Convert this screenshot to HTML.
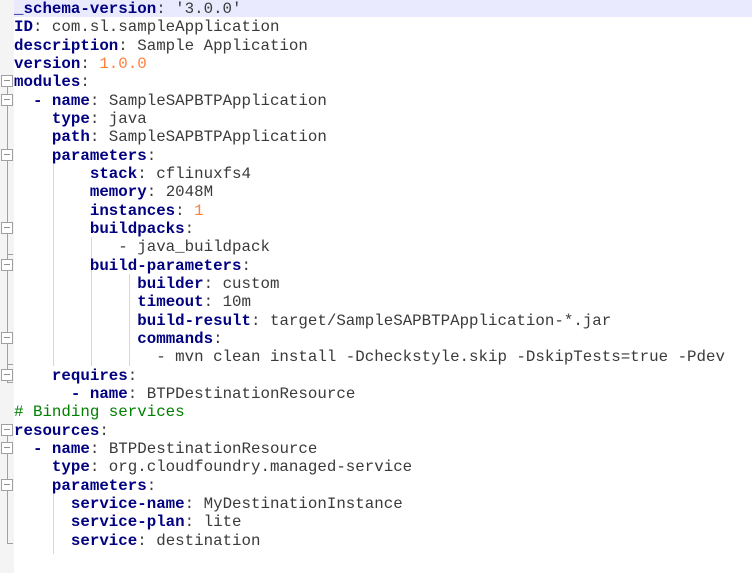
<!DOCTYPE html>
<html><head><meta charset="utf-8"><style>
html,body{margin:0;padding:0;background:#fff;width:752px;height:573px;overflow:hidden}
#m{position:absolute;left:0;top:0;width:14px;height:573px;background:#f4f4f4}
.hl{position:absolute;left:14px;top:0;width:738px;height:17px;background:#eaeaff}
.l{position:absolute;left:14px;height:18.33px;line-height:18.33px;font-family:"Liberation Mono",monospace;font-size:15.8px;white-space:pre;color:#3a3a3a}
.k{color:#000080;font-weight:bold}
.n{color:#ff8040}
.c{color:#008000}
.v{position:absolute;left:7px;width:1px;background:#a0a0a0}
.b{position:absolute;left:1px;width:12px;height:12px;border:1px solid #a0a0a0;background:#fff;box-sizing:border-box}
.b:after{content:"";position:absolute;left:2px;right:2px;top:4px;height:1px;background:#909090}
.e{position:absolute;left:7px;width:6px;height:1px;background:#a0a0a0}
.g{position:absolute;width:1px;background:#d8d8d8}
</style></head><body>
<div id="m"></div>
<div class="hl"></div>
<div class="v" style="top:86px;height:296px"></div>
<div class="v" style="top:435px;height:108px"></div>
<div class="b" style="top:75px"></div>
<div class="b" style="top:94px"></div>
<div class="b" style="top:149px"></div>
<div class="b" style="top:222px"></div>
<div class="b" style="top:259px"></div>
<div class="b" style="top:332px"></div>
<div class="b" style="top:369px"></div>
<div class="b" style="top:424px"></div>
<div class="b" style="top:442px"></div>
<div class="b" style="top:479px"></div>
<div class="e" style="top:254px"></div>
<div class="e" style="top:364px"></div>
<div class="e" style="top:382px"></div>
<div class="e" style="top:543px"></div>
<div class="g" style="left:53px;top:164px;height:202px"></div>
<div class="g" style="left:91px;top:237px;height:129px"></div>
<div class="g" style="left:129px;top:274px;height:92px"></div>
<div class="g" style="left:53px;top:494px;height:60px"></div>
<div class="l" style="top:0px"><span class="k">_schema-version</span>: '3.0.0'</div>
<div class="l" style="top:18.3px"><span class="k">ID</span>: com.sl.sampleApplication</div>
<div class="l" style="top:36.7px"><span class="k">description</span>: Sample Application</div>
<div class="l" style="top:55px"><span class="k">version</span>: <span class="n">1.0.0</span></div>
<div class="l" style="top:73.3px"><span class="k">modules</span>:</div>
<div class="l" style="top:91.7px">  <span class="k">- name</span>: SampleSAPBTPApplication</div>
<div class="l" style="top:110px">    <span class="k">type</span>: java</div>
<div class="l" style="top:128.3px">    <span class="k">path</span>: SampleSAPBTPApplication</div>
<div class="l" style="top:146.7px">    <span class="k">parameters</span>:</div>
<div class="l" style="top:165px">        <span class="k">stack</span>: cflinuxfs4</div>
<div class="l" style="top:183.3px">        <span class="k">memory</span>: 2048M</div>
<div class="l" style="top:201.7px">        <span class="k">instances</span>: <span class="n">1</span></div>
<div class="l" style="top:220px">        <span class="k">buildpacks</span>:</div>
<div class="l" style="top:238.3px">           - java_buildpack</div>
<div class="l" style="top:256.7px">        <span class="k">build-parameters</span>:</div>
<div class="l" style="top:275px">             <span class="k">builder</span>: custom</div>
<div class="l" style="top:293.3px">             <span class="k">timeout</span>: 10m</div>
<div class="l" style="top:311.7px">             <span class="k">build-result</span>: target/SampleSAPBTPApplication-*.jar</div>
<div class="l" style="top:330px">             <span class="k">commands</span>:</div>
<div class="l" style="top:348.3px">               - mvn clean install -Dcheckstyle.skip -DskipTests=true -Pdev</div>
<div class="l" style="top:366.7px">    <span class="k">requires</span>:</div>
<div class="l" style="top:385px">      <span class="k">- name</span>: BTPDestinationResource</div>
<div class="l" style="top:403.3px"><span class="c"># Binding services</span></div>
<div class="l" style="top:421.7px"><span class="k">resources</span>:</div>
<div class="l" style="top:440px">  <span class="k">- name</span>: BTPDestinationResource</div>
<div class="l" style="top:458.3px">    <span class="k">type</span>: org.cloudfoundry.managed-service</div>
<div class="l" style="top:476.7px">    <span class="k">parameters</span>:</div>
<div class="l" style="top:495px">      <span class="k">service-name</span>: MyDestinationInstance</div>
<div class="l" style="top:513.3px">      <span class="k">service-plan</span>: lite</div>
<div class="l" style="top:531.7px">      <span class="k">service</span>: destination</div>
</body></html>
